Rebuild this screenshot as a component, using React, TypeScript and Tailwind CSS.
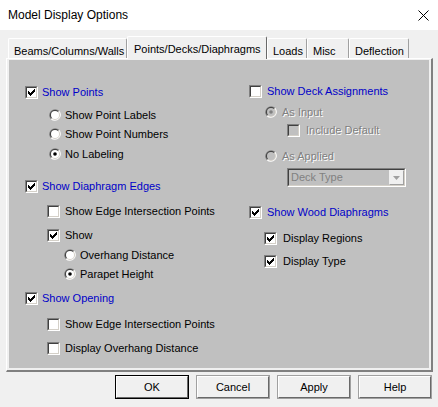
import React from "react";

// classic 7x7 check glyph, one rect per pixel run
const CHECK_RUNS: [number, number, number][] = [
  [0, 6, 1],
  [1, 5, 2],
  [2, 0, 1],
  [2, 4, 3],
  [3, 0, 2],
  [3, 3, 3],
  [4, 0, 5],
  [5, 1, 3],
  [6, 2, 1],
];

function CheckMark({ color }: { color: string }) {
  return (
    <svg width="7" height="7" viewBox="0 0 7 7" shapeRendering="crispEdges">
      {CHECK_RUNS.map(([y, x, w], i) => (
        <rect key={i} x={x} y={y} width={w} height={1} fill={color} />
      ))}
    </svg>
  );
}

function Check({ checked = false, disabled = false }: { checked?: boolean; disabled?: boolean }) {
  return (
    <span className="box-border flex h-[13px] w-[13px] shrink-0 border border-t-[#808080] border-l-[#808080] border-r-white border-b-white">
      <span
        className={`box-border flex flex-1 items-center justify-center border border-t-[#404040] border-l-[#404040] border-r-[#d4d0c8] border-b-[#d4d0c8] ${
          disabled ? "bg-[#c0c0c0]" : "bg-white"
        }`}
      >
        {checked && <CheckMark color={disabled ? "#808080" : "#000"} />}
      </span>
    </span>
  );
}

function Radio({ checked = false, disabled = false }: { checked?: boolean; disabled?: boolean }) {
  return (
    <svg width="12" height="12" viewBox="0 0 12 12" className="shrink-0">
      <path d="M1.76 10.24 A6 6 0 0 1 10.24 1.76 Z" fill="#808080" />
      <path d="M1.76 10.24 A6 6 0 0 0 10.24 1.76 Z" fill="#ffffff" />
      <path d="M2.46 9.54 A5 5 0 0 1 9.54 2.46 Z" fill="#404040" />
      <path d="M2.46 9.54 A5 5 0 0 0 9.54 2.46 Z" fill="#d4d0c8" />
      <circle cx="6" cy="6" r="4" fill={disabled ? "#c0c0c0" : "#ffffff"} />
      {checked && <circle cx="6" cy="6" r="1.8" fill={disabled ? "#808080" : "#000"} />}
    </svg>
  );
}

type Tone = "blue" | "plain" | "off";

function Label({ tone = "plain", children }: { tone?: Tone; children: React.ReactNode }) {
  const cls =
    tone === "blue"
      ? "text-[#0000c8]"
      : tone === "off"
        ? "text-[#808080] [text-shadow:1px_1px_0_#ffffff]"
        : "text-black";
  return <span className={`whitespace-nowrap text-[11px] leading-none ${cls}`}>{children}</span>;
}

function Row({ className = "", children }: { className?: string; children: React.ReactNode }) {
  return <div className={`flex h-[16px] items-center ${className}`}>{children}</div>;
}

function Tab({ label, width, active = false }: { label: string; width: string; active?: boolean }) {
  if (active) {
    return (
      <div
        className={`relative z-10 -mb-px flex h-[23px] ${width} items-start rounded-t-[2px] border-t border-l border-r border-t-white border-l-white border-r-[#696969] bg-[#f0f0f0] pl-[6px] pt-[4px] text-[11px] text-black`}
      >
        {label}
      </div>
    );
  }
  return (
    <div
      className={`mt-[2px] flex h-[20px] ${width} items-start rounded-t-[2px] border-t border-l border-r border-t-white border-l-white border-r-[#a0a0a0] pl-[5px] pt-[4px] text-[11px] text-black`}
    >
      {label}
    </div>
  );
}

function Btn({ label, primary = false }: { label: string; primary?: boolean }) {
  return (
    <button
      type="button"
      className={`box-border flex h-[24px] w-[74px] items-center justify-center border ${
        primary ? "border-black" : "border-[#a0a0a0]"
      } bg-[#f0f0f0] p-0`}
    >
      <span className="flex h-full w-full items-center justify-center border border-t-white border-l-white border-r-[#696969] border-b-[#696969] text-[11px] text-black">
        {label}
      </span>
    </button>
  );
}

export default function App() {
  return (
    <div className="h-[407px] w-[438px] overflow-hidden bg-[#f0f0f0] font-['Liberation_Sans',Arial,sans-serif]">
      {/* title bar */}
      <div className="flex h-[30px] items-center justify-between bg-white pl-[8px] pr-[9px]">
        <span className="text-[12px] text-black">Model Display Options</span>
        <svg width="11" height="11" viewBox="0 0 11 11">
          <path d="M0.5 0.5 L10.5 10.5 M10.5 0.5 L0.5 10.5" stroke="#000" strokeWidth="1" />
        </svg>
      </div>

      {/* tabs */}
      <div className="ml-[8px] flex h-[28px] items-end">
        <Tab label="Beams/Columns/Walls" width="w-[119px]" />
        <Tab label="Points/Decks/Diaphragms" width="w-[140px]" active />
        <Tab label="Loads" width="w-[40px]" />
        <Tab label="Misc" width="w-[42px]" />
        <Tab label="Deflection" width="w-[60px]" />
      </div>

      {/* tab page */}
      <div className="ml-[6px] box-border h-[314px] w-[427px] border-t border-l border-t-white border-l-white border-r-2 border-b-2 border-r-[#808080] border-b-[#808080] pl-[2px] pr-[2px] pt-[1px] pb-[2px]">
        <div className="flex h-[308px] w-[420px] bg-[#c0c0c0]">
          {/* left column */}
          <div className="flex w-[240px] flex-col pt-[24px]">
            <Row className="ml-[16px] gap-[4px]">
              <Check checked />
              <Label tone="blue">Show Points</Label>
            </Row>
            <Row className="ml-[40px] mt-[7px] gap-[4px]">
              <Radio />
              <Label>Show Point Labels</Label>
            </Row>
            <Row className="ml-[40px] mt-[3px] gap-[4px]">
              <Radio />
              <Label>Show Point Numbers</Label>
            </Row>
            <Row className="ml-[40px] mt-[4px] gap-[4px]">
              <Radio checked />
              <Label>No Labeling</Label>
            </Row>
            <Row className="ml-[16px] mt-[16px] gap-[4px]">
              <Check checked />
              <Label tone="blue">Show Diaphragm Edges</Label>
            </Row>
            <Row className="ml-[38px] mt-[9px] gap-[5px]">
              <Check />
              <Label>Show Edge Intersection Points</Label>
            </Row>
            <Row className="ml-[38px] mt-[8px] gap-[5px]">
              <Check checked />
              <Label>Show</Label>
            </Row>
            <Row className="ml-[55px] mt-[4px] gap-[4px]">
              <Radio />
              <Label>Overhang Distance</Label>
            </Row>
            <Row className="ml-[55px] mt-[3px] gap-[4px]">
              <Radio checked />
              <Label>Parapet Height</Label>
            </Row>
            <Row className="ml-[16px] mt-[8px] gap-[4px]">
              <Check checked />
              <Label tone="blue">Show Opening</Label>
            </Row>
            <Row className="ml-[38px] mt-[10px] gap-[5px]">
              <Check />
              <Label>Show Edge Intersection Points</Label>
            </Row>
            <Row className="ml-[38px] mt-[8px] gap-[5px]">
              <Check />
              <Label>Display Overhang Distance</Label>
            </Row>
          </div>

          {/* right column */}
          <div className="flex flex-1 flex-col pt-[23px]">
            <Row className="gap-[5px]">
              <Check />
              <Label tone="blue">Show Deck Assignments</Label>
            </Row>
            <Row className="ml-[16px] mt-[5px] gap-[5px]">
              <Radio checked disabled />
              <Label tone="off">As Input</Label>
            </Row>
            <Row className="ml-[38px] mt-[2px] gap-[6px]">
              <Check disabled />
              <Label tone="off">Include Default</Label>
            </Row>
            <Row className="ml-[16px] mt-[10px] gap-[5px]">
              <Radio disabled />
              <Label tone="off">As Applied</Label>
            </Row>
            <div className="ml-[38px] mt-[4px] box-border flex h-[19px] w-[119px] border border-t-[#808080] border-l-[#808080] border-r-white border-b-white">
              <div className="box-border flex flex-1 items-center border border-t-[#404040] border-l-[#404040] border-r-[#d4d0c8] border-b-[#d4d0c8] bg-[#c0c0c0]">
                <span className="flex-1 pl-[2px] text-[11px] leading-none text-[#808080]">Deck Type</span>
                <span className="box-border flex h-[15px] w-[15px] items-center justify-center border border-t-[#f0f0f0] border-l-[#f0f0f0] border-r-[#a0a0a0] border-b-[#a0a0a0] bg-[#f0f0f0]">
                  <svg width="7" height="4" viewBox="0 0 7 4">
                    <path d="M0 0 H7 L3.5 4 Z" fill="#a0a0a0" />
                  </svg>
                </span>
              </div>
            </div>
            <Row className="mt-[17px] gap-[5px]">
              <Check checked />
              <Label tone="blue">Show Wood Diaphragms</Label>
            </Row>
            <Row className="ml-[15px] mt-[10px] gap-[6px]">
              <Check checked />
              <Label>Display Regions</Label>
            </Row>
            <Row className="ml-[15px] mt-[7px] gap-[6px]">
              <Check checked />
              <Label>Display Type</Label>
            </Row>
          </div>
        </div>
      </div>

      {/* buttons */}
      <div className="mt-[3px] flex justify-end gap-[7px] pr-[6px]">
        <Btn label="OK" primary />
        <Btn label="Cancel" />
        <Btn label="Apply" />
        <Btn label="Help" />
      </div>
    </div>
  );
}
